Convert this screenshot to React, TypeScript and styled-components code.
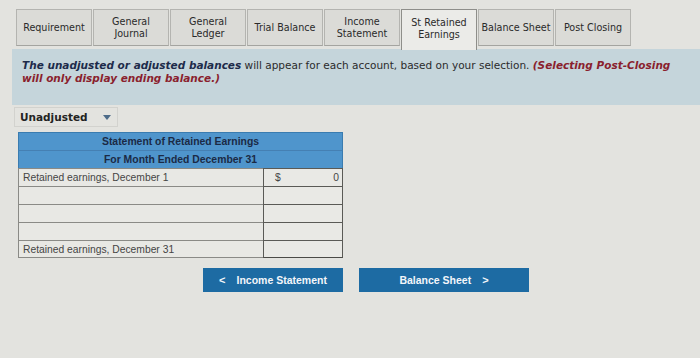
import React from "react";
import styled, { createGlobalStyle } from "styled-components";

const Global = createGlobalStyle`
  html, body { margin: 0; padding: 0; background: #e3e3df; }
  body { font-family: "DejaVu Sans", Verdana, sans-serif; }
`;

const Page = styled.div`
  width: 700px;
  height: 358px;
  overflow: hidden;
  background: #e3e3df;
  padding-top: 9px;
  box-sizing: border-box;
`;

const TabBar = styled.div`
  display: flex;
  align-items: flex-start;
  gap: 1px;
  padding-left: 16px;
  height: 40px;
  position: relative;
  z-index: 1;
`;

const Tab = styled.div<{ $active?: boolean }>`
  width: 76px;
  height: ${(p) => (p.$active ? 41 : 37)}px;
  box-sizing: border-box;
  border: 1px solid ${(p) => (p.$active ? "#8e8e8a" : "#b4b4b0")};
  border-bottom: ${(p) => (p.$active ? "none" : "1px solid #a4a4a0")};
  background: ${(p) => (p.$active ? "#ebebe8" : "#dbdbd7")};
  display: flex;
  align-items: center;
  justify-content: center;
  text-align: center;
  font-size: 9.6px;
  line-height: 12px;
  color: #2a2a2a;
  padding-bottom: ${(p) => (p.$active ? 3 : 0)}px;
`;

const InfoBar = styled.div`
  margin-left: 12px;
  height: 56px;
  background: #c5d5db;
  box-sizing: border-box;
  padding: 10px 10px 0 10px;
  font-size: 10.5px;
  line-height: 12.5px;
  color: #2b2b2b;
`;

const InfoLine = styled.div`
  white-space: nowrap;
`;

const Strong = styled.b`
  font-style: italic;
  color: #1d2b4a;
`;

const RedNote = styled.b`
  font-style: italic;
  color: #8a1f2e;
`;

const Select = styled.div`
  margin: 2px 0 0 14px;
  width: 104px;
  height: 20px;
  box-sizing: border-box;
  border: 1px solid #d2d2ce;
  display: flex;
  align-items: center;
  justify-content: space-between;
  padding: 0 6px 0 5px;
  font-size: 10.5px;
  font-weight: bold;
  color: #232323;
`;

const Caret = styled.span`
  width: 0;
  height: 0;
  border-left: 4px solid transparent;
  border-right: 4px solid transparent;
  border-top: 5px solid #4d6b88;
`;

const Table = styled.div`
  margin: 5px 0 0 18px;
  width: 325px;
  display: grid;
  grid-template-columns: 245px 80px;
  font-family: "Liberation Sans", Arial, sans-serif;
`;

const HeadCell = styled.div<{ $first?: boolean }>`
  grid-column: 1 / span 2;
  height: 18px;
  background: #4f95cc;
  border-top: 1px solid ${(p) => (p.$first ? "#3a7cb0" : "#4580b3")};
  border-left: 1px solid #3a7cb0;
  border-right: 1px solid #3a7cb0;
  display: flex;
  align-items: center;
  justify-content: center;
  font-size: 10.4px;
  font-weight: bold;
  color: #1b2a45;
  box-sizing: border-box;
`;

const LabelCell = styled.div<{ $last?: boolean }>`
  height: 18px;
  box-sizing: border-box;
  border-top: 1px solid #8a8a86;
  border-left: 1px solid #8a8a86;
  border-bottom: ${(p) => (p.$last ? "1px solid #8a8a86" : "none")};
  background: #e8e8e4;
  display: flex;
  align-items: center;
  padding-left: 4px;
  font-size: 10.3px;
  color: #454545;
`;

const ValueCell = styled.div<{ $last?: boolean }>`
  height: 18px;
  box-sizing: border-box;
  border: 1px solid #5a5a56;
  border-bottom: ${(p) => (p.$last ? "1px solid #4a4a46" : "none")};
  background: #e9e9e5;
  display: flex;
  align-items: center;
  justify-content: space-between;
  padding: 0 3px 0 11px;
  font-size: 10.3px;
  color: #454545;
`;

const Buttons = styled.div`
  display: flex;
  gap: 16px;
  margin: 10px 0 0 203px;
`;

const NavButton = styled.div<{ $w: number }>`
  width: ${(p) => p.$w}px;
  height: 24px;
  background: #1d6ba3;
  color: #f3f6fa;
  font-family: "Liberation Sans", Arial, sans-serif;
  font-size: 10.5px;
  font-weight: bold;
  display: flex;
  align-items: center;
  justify-content: center;
  gap: 11px;
`;

const Chev = styled.span`
  font-size: 11px;
  font-weight: bold;
`;

const tabs = [
  "Requirement",
  "General\nJournal",
  "General\nLedger",
  "Trial Balance",
  "Income\nStatement",
  "St Retained\nEarnings",
  "Balance Sheet",
  "Post Closing",
];

const rows = [
  { label: "Retained earnings, December 1", value: true },
  { label: "", value: false },
  { label: "", value: false },
  { label: "", value: false },
  { label: "Retained earnings, December 31", value: false },
];

export default function App() {
  return (
    <Page>
      <Global />
      <TabBar>
        {tabs.map((t, i) => (
          <Tab key={i} $active={i === 5}>
            <span>
              {t.split("\n").map((l, j) => (
                <React.Fragment key={j}>
                  {j > 0 && <br />}
                  {l}
                </React.Fragment>
              ))}
            </span>
          </Tab>
        ))}
      </TabBar>
      <InfoBar>
        <InfoLine>
          <Strong>The unadjusted or adjusted balances</Strong> will appear for each account, based on your selection.{" "}
          <RedNote>(Selecting Post-Closing</RedNote>
        </InfoLine>
        <InfoLine>
          <RedNote>will only display ending balance.)</RedNote>
        </InfoLine>
      </InfoBar>
      <Select>
        <span>Unadjusted</span>
        <Caret />
      </Select>
      <Table>
        <HeadCell $first>Statement of Retained Earnings</HeadCell>
        <HeadCell>For Month Ended December 31</HeadCell>
        {rows.map((r, i) => (
          <React.Fragment key={i}>
            <LabelCell $last={i === rows.length - 1}>{r.label}</LabelCell>
            <ValueCell $last={i === rows.length - 1}>
              {r.value && (
                <>
                  <span>$</span>
                  <span>0</span>
                </>
              )}
            </ValueCell>
          </React.Fragment>
        ))}
      </Table>
      <Buttons>
        <NavButton $w={140}>
          <Chev>&lt;</Chev>
          <span>Income Statement</span>
        </NavButton>
        <NavButton $w={170}>
          <span>Balance Sheet</span>
          <Chev>&gt;</Chev>
        </NavButton>
      </Buttons>
    </Page>
  );
}
